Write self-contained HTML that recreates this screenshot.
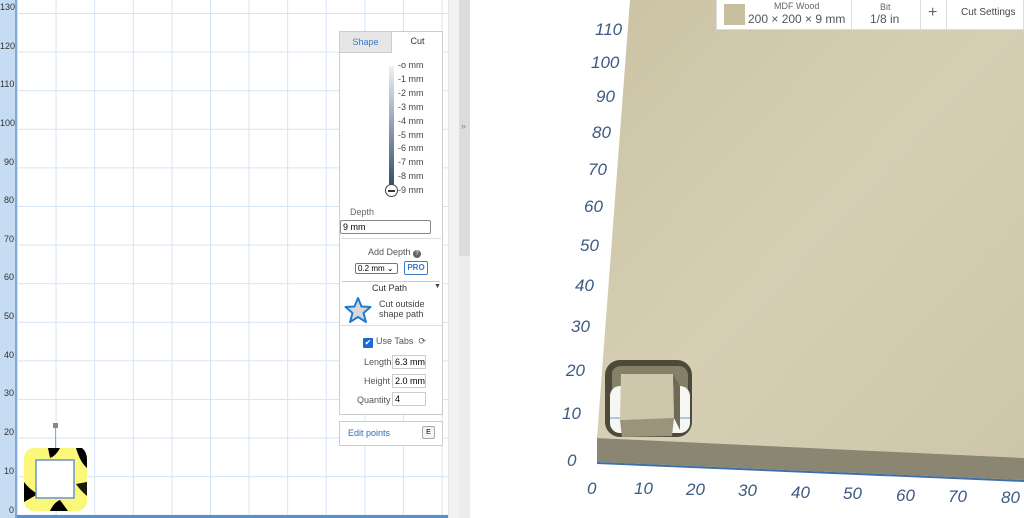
<!DOCTYPE html>
<html><head><meta charset="utf-8"><style>
*{margin:0;padding:0;box-sizing:border-box}
body{width:1024px;height:518px;overflow:hidden;background:#fff;font-family:"Liberation Sans",sans-serif;position:relative}
.abs{position:absolute}
.lbl{position:absolute;font-size:9px;color:#333;text-align:right;width:14px}
.p{font-size:9px;color:#444}
.ax{position:absolute;font-style:italic;font-size:17px;color:#3d5a80}
</style></head><body>
<div class="abs" style="left:0;top:0;width:448px;height:518px;background-color:#fff;background-image:linear-gradient(to right,#d6e4f4 1px,transparent 1px),linear-gradient(to bottom,#d6e4f4 1px,transparent 1px);background-size:38.6px 38.6px;background-position:17px 13px"></div>
<div class="abs" style="left:0;top:0;width:17px;height:518px;background:#c5dcf2;border-right:2px solid #7fa8d4"></div>
<div class="abs" style="left:17px;top:515px;width:431px;height:3px;background:#5b8fcc"></div>
<div class="lbl" style="left:0;top:2px">130</div>
<div class="lbl" style="left:0;top:41px">120</div>
<div class="lbl" style="left:0;top:79px">110</div>
<div class="lbl" style="left:0;top:118px">100</div>
<div class="lbl" style="left:0;top:157px">90</div>
<div class="lbl" style="left:0;top:195px">80</div>
<div class="lbl" style="left:0;top:234px">70</div>
<div class="lbl" style="left:0;top:272px">60</div>
<div class="lbl" style="left:0;top:311px">50</div>
<div class="lbl" style="left:0;top:350px">40</div>
<div class="lbl" style="left:0;top:388px">30</div>
<div class="lbl" style="left:0;top:427px">20</div>
<div class="lbl" style="left:0;top:466px">10</div>
<div class="lbl" style="left:0;top:505px">0</div>
<svg class="abs" style="left:20px;top:418px" width="72" height="100">
<line x1="35.5" y1="10" x2="35.5" y2="30" stroke="#8aa8d0"/>
<rect x="33" y="5" width="5" height="5" fill="#888"/>
<rect x="4" y="30" width="63" height="63" rx="10" fill="#fbf77a"/>
<path d="M28 30 H40 Q36 38 30 40 Z" fill="#000"/>
<path d="M56 30 H62 Q67 34 67 42 V50 Q60 44 56 30Z" fill="#000"/>
<path d="M4 64 Q10 72 18 76 L4 84Z" fill="#000"/>
<path d="M30 93 Q34 84 40 82 L48 93Z" fill="#000"/>
<path d="M67 64 L67 78 Q60 72 56 66Z" fill="#000" opacity=".9"/>
<rect x="16" y="42" width="38" height="38" fill="#fff" stroke="#6a92cc" stroke-width="1.5"/>
</svg>
<div class="abs" style="left:448px;top:0;width:11px;height:518px;background:#f2f2f2;border-left:1px solid #e4e4e4"></div>
<div class="abs" style="left:459px;top:0;width:11px;height:256px;background:#dcdcdc"></div>
<div class="abs" style="left:459px;top:256px;width:11px;height:262px;background:#ececec"></div>
<div class="abs" style="left:461px;top:121px;font-size:9px;color:#888">»</div>
<div class="abs" style="left:339px;top:31px;width:104px;height:384px;background:#fff;border:1px solid #ccc"></div>
<div class="abs" style="left:339px;top:31px;width:53px;height:22px;background:#e6e6e6;border:1px solid #ccc;font-size:9px;color:#3a7cc4;text-align:center;line-height:20px">Shape</div>
<div class="abs" style="left:392px;top:31px;width:51px;height:22px;font-size:9px;color:#333;text-align:center;line-height:20px">Cut</div>
<div class="abs" style="left:389px;top:66px;width:5px;height:122px;background:linear-gradient(#eef1f6,#2f4a6b)"></div>
<div class="abs" style="left:385px;top:184px;width:13px;height:13px;border:1px solid #444;border-radius:50%;background:#fff"></div>
<div class="abs" style="left:388px;top:190px;width:7px;height:1.5px;background:#333"></div>
<div class="abs p" style="left:398px;top:59px;line-height:13.9px">-o mm<br>-1 mm<br>-2 mm<br>-3 mm<br>-4 mm<br>-5 mm<br>-6 mm<br>-7 mm<br>-8 mm<br>-9 mm</div>
<div class="abs p" style="left:350px;top:207px;color:#666">Depth</div>
<div class="abs" style="left:340px;top:220px;width:91px;height:14px;border:1px solid #888;border-radius:2px;font-size:9px;padding-left:2px;line-height:12px">9 mm</div>
<div class="abs" style="left:341px;top:238px;width:100px;height:1px;background:#ddd"></div>
<div class="abs p" style="left:368px;top:247px;color:#555">Add Depth <span style="display:inline-block;width:8px;height:8px;border-radius:50%;background:#666;color:#fff;font-size:6px;text-align:center;line-height:8px">?</span></div>
<div class="abs" style="left:355px;top:263px;width:43px;height:11px;border:1px solid #777;border-radius:2px;font-size:8px;line-height:9px;padding-left:2px">0.2 mm ⌄</div>
<div class="abs" style="left:404px;top:261px;width:24px;height:14px;border:1px solid #3a7cc4;border-radius:2px;font-size:8px;font-weight:bold;color:#3a7cc4;text-align:center;line-height:12px">PRO</div>
<div class="abs" style="left:342px;top:281px;width:98px;height:1px;background:#ccc"></div>
<div class="abs" style="left:372px;top:283px;font-size:9px;color:#333">Cut Path</div>
<div class="abs" style="left:434px;top:283px;font-size:7px;color:#444">▼</div>
<svg class="abs" style="left:343px;top:296px" width="30" height="28"><polygon points="15,2 18.5,10.5 27.5,11 20.5,17 23,26 15,21 7,26 9.5,17 2.5,11 11.5,10.5" fill="#d8d8d8" stroke="#1f7ad6" stroke-width="2" stroke-linejoin="round"/></svg>
<div class="abs p" style="left:379px;top:299px;line-height:10px">Cut outside<br>shape path</div>
<div class="abs" style="left:340px;top:325px;width:103px;height:1px;background:#ddd"></div>
<div class="abs" style="left:363px;top:338px;width:10px;height:10px;background:#1f66d6;border-radius:1px;color:#fff;font-size:8px;line-height:10px;text-align:center">✔</div>
<div class="abs p" style="left:376px;top:336px;color:#555">Use Tabs &nbsp;⟳</div>
<div class="abs p" style="left:364px;top:357px;color:#555">Length</div>
<div class="abs" style="left:392px;top:355px;width:34px;height:14px;border:1px solid #ccc;font-size:9px;padding-left:2px;line-height:12px">6.3 mm</div>
<div class="abs p" style="left:364px;top:376px;color:#555">Height</div>
<div class="abs" style="left:392px;top:374px;width:34px;height:14px;border:1px solid #ccc;font-size:9px;padding-left:2px;line-height:12px">2.0 mm</div>
<div class="abs p" style="left:357px;top:395px;color:#555">Quantity</div>
<div class="abs" style="left:392px;top:392px;width:34px;height:14px;border:1px solid #ccc;font-size:9px;padding-left:2px;line-height:12px">4</div>
<div class="abs" style="left:339px;top:421px;width:104px;height:25px;border:1px solid #ccc;background:#fff"></div>
<div class="abs" style="left:348px;top:428px;font-size:9px;color:#2a6fb8">Edit points</div>
<div class="abs" style="left:422px;top:426px;width:13px;height:13px;border:1px solid #aaa;border-radius:2px;font-size:7px;text-align:center;line-height:11px;background:#f4f4f4">E</div>
<svg class="abs" style="left:470px;top:0" width="554" height="518">
<defs><linearGradient id="w" x1="0" y1="0" x2="1" y2="1"><stop offset="0" stop-color="#cbc3a3"/><stop offset=".5" stop-color="#d6cfb4"/><stop offset="1" stop-color="#cdc6aa"/></linearGradient></defs>
<polygon points="160,0 554,0 554,458 127,438" fill="url(#w)"/>
<polygon points="127,438 554,458 554,480 127,462" fill="#8b8671"/>
<line x1="127" y1="463" x2="554" y2="481" stroke="#3f6fa8" stroke-width="2"/>
<rect x="135" y="360" width="87" height="77" rx="15" fill="#4e4a3a"/>
<path d="M142 372 Q144 366 152 366 H208 Q216 366 218 374 V420 H142Z" fill="#858068"/>
<rect x="140" y="386" width="80" height="47" rx="10" fill="#f6f6f4"/>
<line x1="140" y1="418" x2="220" y2="418" stroke="#aac7ea" stroke-width="2"/>
<polygon points="151,374 203,374 204,418 150,420" fill="#cfc7ab"/>
<polygon points="150,420 204,418 202,436 152,437" fill="#9a947a"/>
<polygon points="203,374 210,386 210,430 204,418" fill="#6f6a54"/>
</svg>
<div class="ax" style="left:595px;top:20px">110</div>
<div class="ax" style="left:591px;top:53px">100</div>
<div class="ax" style="left:596px;top:87px">90</div>
<div class="ax" style="left:592px;top:123px">80</div>
<div class="ax" style="left:588px;top:160px">70</div>
<div class="ax" style="left:584px;top:197px">60</div>
<div class="ax" style="left:580px;top:236px">50</div>
<div class="ax" style="left:575px;top:276px">40</div>
<div class="ax" style="left:571px;top:317px">30</div>
<div class="ax" style="left:566px;top:361px">20</div>
<div class="ax" style="left:562px;top:404px">10</div>
<div class="ax" style="left:567px;top:451px">0</div>
<div class="ax" style="left:587px;top:479px">0</div>
<div class="ax" style="left:634px;top:479px">10</div>
<div class="ax" style="left:686px;top:480px">20</div>
<div class="ax" style="left:738px;top:481px">30</div>
<div class="ax" style="left:791px;top:483px">40</div>
<div class="ax" style="left:843px;top:484px">50</div>
<div class="ax" style="left:896px;top:486px">60</div>
<div class="ax" style="left:948px;top:487px">70</div>
<div class="ax" style="left:1001px;top:488px">80</div>
<div class="abs" style="left:716px;top:0;width:308px;height:30px;background:#fff;border:1px solid #ddd;border-top:0"></div>
<div class="abs" style="left:724px;top:4px;width:21px;height:21px;background:#c8bf9e"></div>
<div class="abs" style="left:774px;top:1px;font-size:9px;color:#666">MDF Wood</div>
<div class="abs" style="left:748px;top:12px;font-size:12px;color:#555">200 × 200 × 9 mm</div>
<div class="abs" style="left:851px;top:0;width:1px;height:30px;background:#ddd"></div>
<div class="abs" style="left:880px;top:2px;font-size:9px;color:#666">Bit</div>
<div class="abs" style="left:870px;top:12px;font-size:12px;color:#555">1/8 in</div>
<div class="abs" style="left:920px;top:0;width:1px;height:30px;background:#ddd"></div>
<div class="abs" style="left:928px;top:4px;font-size:16px;color:#666">+</div>
<div class="abs" style="left:946px;top:0;width:1px;height:30px;background:#ddd"></div>
<div class="abs" style="left:961px;top:7px;font-size:10px;color:#444">Cut Settings</div>
</body></html>
